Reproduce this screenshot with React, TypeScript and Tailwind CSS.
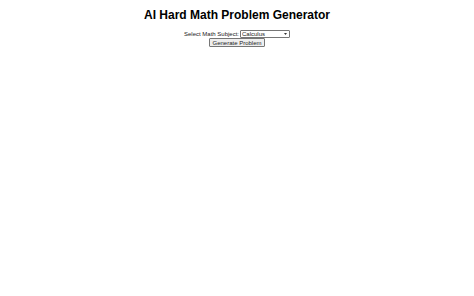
export default function App() {
  return (
    <div className="min-h-screen bg-white text-center text-black font-['Liberation_Sans',Arial,sans-serif]">
      <h1 className="pt-[8px] mb-[8px] text-[12px] leading-[14px] font-bold">AI Hard Math Problem Generator</h1>
      <div className="mt-[6px] flex flex-col items-center text-[6px] leading-[7px] text-[#222]">
        <div className="flex items-center justify-center gap-[1px]">
          <label htmlFor="subject">Select Math Subject:</label>
          <div className="relative">
            <select
              id="subject"
              defaultValue="Calculus"
              className="block h-[8px] w-[50px] appearance-none border-[0.5px] border-[#767676] rounded-[1px] bg-white pl-[1px] text-left text-[6px] leading-[6px] outline-none"
            >
              <option>Algebra</option>
              <option>Calculus</option>
              <option>Geometry</option>
            </select>
            <svg className="pointer-events-none absolute right-[3px] top-[3px] h-[2px] w-[3px]" viewBox="0 0 3 2">
              <path d="M0 0h3L1.5 2z" fill="#333" />
            </svg>
          </div>
        </div>
        <button className="h-[9px] px-[2px] border-[0.5px] border-[#767676] rounded-[1px] bg-[#efefef] text-[6px] leading-[6px]">
          Generate Problem
        </button>
      </div>
    </div>
  );
}
